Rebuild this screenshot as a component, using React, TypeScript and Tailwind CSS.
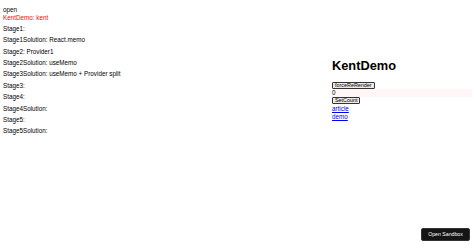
import React from "react";

const stages = [
  "Stage1:",
  "Stage1Solution: React.memo",
  "Stage2: Provider1",
  "Stage2Solution: useMemo",
  "Stage3Solution: useMemo + Provider split",
  "Stage3:",
  "Stage4:",
  "Stage4Solution:",
  "Stage5:",
  "Stage5Solution:",
];

export default function App() {
  return (
    <div
      className="relative w-[474px] h-[248px] bg-white text-black overflow-hidden"
      style={{ fontFamily: '"Liberation Sans", Arial, sans-serif' }}
    >
      <div className="flex h-full">
        <div className="w-[332px] pl-[3px] pt-[6px] text-[6.3px] leading-[7.5px]">
          <div>open</div>
          <div className="text-[#ff0000]">KentDemo: kent</div>
          <div className="flex flex-col gap-[3.9px] mt-[3.9px]">
            {stages.map((s) => (
              <div key={s}>{s}</div>
            ))}
          </div>
        </div>
        <div className="flex-1 pt-[58px] pr-[2px] text-[6.3px] leading-[7.5px]">
          <div className="text-[12.8px] leading-[15px] font-bold mb-[9px]">KentDemo</div>
          <div className="flex flex-col items-start">
            <button className="h-[7px] px-[2px] border border-[#333] rounded-[1px] bg-[#efe9e9] text-[5.4px] leading-[5px] text-black">
              forceReRender
            </button>
            <div className="self-stretch h-[8px] leading-[8px] bg-[#fef6f7]">0</div>
            <button className="h-[7px] px-[2px] border border-[#333] rounded-[1px] bg-[#efe9e9] text-[5.4px] leading-[5px] text-black">
              SetCount
            </button>
            <a href="#" className="text-[#0000ee] underline mt-[1px] leading-[7.5px]">article</a>
            <a href="#" className="text-[#0000ee] underline leading-[7.5px]">demo</a>
          </div>
        </div>
      </div>
      <div className="absolute left-[421px] top-[228px] w-[49px] h-[13px] rounded-[2px] bg-[#151515] border border-[#333] flex items-center justify-center text-white text-[5.2px]">
        Open Sandbox
      </div>
    </div>
  );
}
